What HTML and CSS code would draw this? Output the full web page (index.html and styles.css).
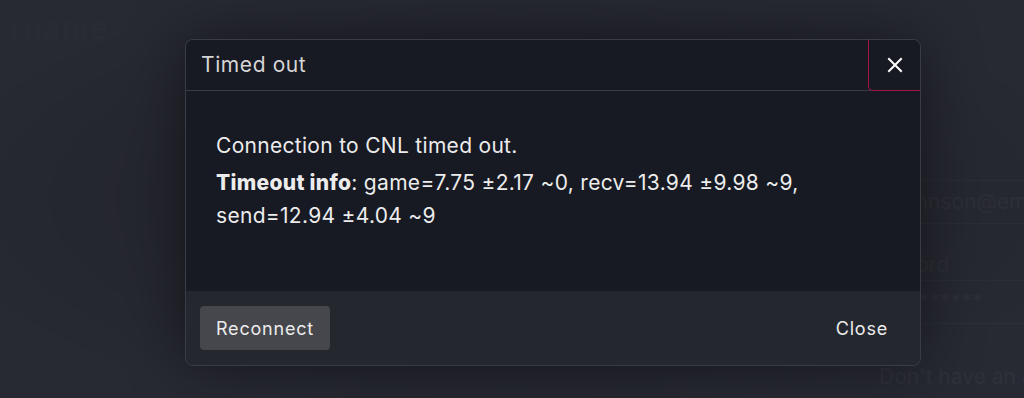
FILE: index.html
```html
<!DOCTYPE html>
<html lang="en">
<head>
    <meta charset="UTF-8">
    <meta name="viewport" content="width=device-width, initial-scale=1.0">
    <title>Timed out</title>
    <link rel="stylesheet" href="styles.css">
</head>
<body>
    <div class="page">
        <div class="side">
            <h2 class="ghost-title">rname</h2>
        </div>
        <div class="login">
            <div class="field">johnson@email.com</div>
            <div class="label">Password</div>
            <div class="field">********</div>
            <p class="signup">Don't have an account?</p>
        </div>
    </div>

    <div class="backdrop">
        <div class="modal">
            <div class="modal-header">
                <h1>Timed out</h1>
                <button class="close-x" aria-label="Close">
                    <svg width="16" height="16" viewBox="0 0 16 16">
                        <path d="M2 2 L14 14 M14 2 L2 14" stroke="#fff" stroke-width="2" stroke-linecap="square"/>
                    </svg>
                </button>
            </div>
            <div class="modal-body">
                <p>Connection to CNL timed out.</p>
                <p><strong>Timeout info</strong>: game=7.75 ±2.17 ~0, recv=13.94 ±9.98 ~9, send=12.94 ±4.04 ~9</p>
            </div>
            <div class="modal-footer">
                <button class="btn btn-grey">Reconnect</button>
                <button class="btn btn-plain">Close</button>
            </div>
        </div>
    </div>
</body>
</html>
```

FILE: styles.css
```css
:root {
    --bg: #282a33;
    --panel: #171923;
    --footer: #25272f;
    --edge: #3a3c45;
    --accent: #a8143f;
    --text: #ececec;
    --ghost: #2f313a;
}
body {
    margin: 0;
    background: var(--bg);
    color: var(--text);
    font-family: Inter, "Noto Sans", sans-serif;
    height: 398px;
    overflow: hidden;
}
.page {
    display: flex;
    height: 398px;
    overflow: hidden;
}
.side {
    width: 850px;
    flex-shrink: 0;
    padding: 10px 0 0 10px;
    box-sizing: border-box;
}
.ghost-title {
    margin: 0;
    font-size: 30px;
    font-weight: 400;
    color: #2a2c35;
    letter-spacing: 2px;
}
.login {
    flex: 1;
    min-width: 0;
    overflow: hidden;
    padding-top: 180px;
    display: flex;
    flex-direction: column;
    color: var(--ghost);
    font-size: 21px;
    white-space: nowrap;
}
.field {
    height: 42px;
    line-height: 42px;
    border-top: 1px solid #2d2f38;
    border-bottom: 1px solid #2d2f38;
    padding-left: 48px;
}
.label {
    height: 56px;
    line-height: 82px;
    padding-left: 2px;
}
.signup {
    margin: 40px 0 0 29px;
}
.backdrop {
    position: fixed;
    inset: 0;
    background: radial-gradient(ellipse at center, rgba(0,0,0,0.12) 40%, rgba(0,0,0,0) 80%);
}
.modal {
    position: absolute;
    left: 185px;
    top: 39px;
    width: 734px;
    border: 1px solid var(--edge);
    border-radius: 8px;
    overflow: hidden;
    box-shadow: 0 0 60px rgba(0, 0, 0, 0.45);
    display: flex;
    flex-direction: column;
}
.modal-header {
    display: flex;
    align-items: stretch;
    background: var(--panel);
    border-bottom: 1px solid var(--edge);
    height: 50px;
}
.modal-header h1 {
    flex: 1;
    margin: 0;
    padding-left: 15px;
    font-size: 21px;
    font-weight: 400;
    letter-spacing: 0.6px;
    line-height: 50px;
    color: #d6d6d6;
}
.close-x {
    width: 52px;
    margin-bottom: -1px;
    background: var(--panel);
    border: none;
    border-left: 1px solid var(--accent);
    border-bottom: 1px solid var(--accent);
    border-bottom-left-radius: 5px;
    display: flex;
    align-items: center;
    justify-content: center;
    padding: 0;
    cursor: pointer;
}
.modal-body {
    background: var(--panel);
    padding: 38px 30px 34px;
    height: 128px;
    font-size: 21px;
    letter-spacing: 0.3px;
    line-height: 33px;
}
.modal-body p {
    margin: 0 0 4px;
}
.modal-body strong {
    font-weight: 800;
}
.modal-footer {
    background: var(--footer);
    display: flex;
    justify-content: space-between;
    align-items: center;
    padding: 15px 14px;
}
.btn {
    font-family: Inter, "Noto Sans", sans-serif;
    font-size: 18px;
    color: var(--text);
    border: none;
    border-radius: 4px;
    height: 44px;
    padding: 0 16px;
    letter-spacing: 0.8px;
    cursor: pointer;
}
.btn-grey {
    background: #46474c;
}
.btn-plain {
    background: transparent;
    padding: 0 18px;
}
```
